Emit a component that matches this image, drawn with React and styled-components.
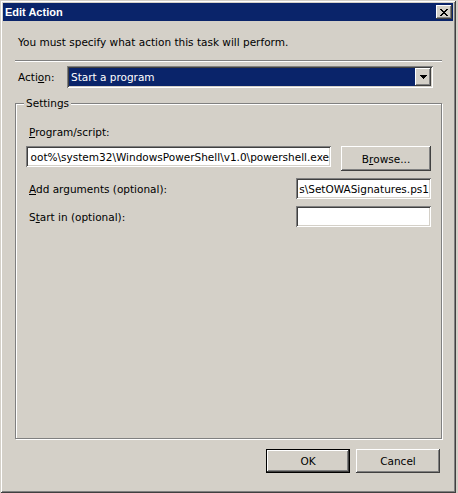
import React from 'react';
import styled, { createGlobalStyle, css } from 'styled-components';

const GlobalStyle = createGlobalStyle`
  html, body {
    margin: 0;
    padding: 0;
    background: #d4d0c8;
  }
  body {
    font-family: Tahoma, "DejaVu Sans", sans-serif;
    font-size: 10.5px;
    color: #000;
  }
`;

const raised = css`
  box-shadow: inset -1px -1px 0 #404040, inset 1px 1px 0 #fff,
    inset -2px -2px 0 #808080, inset 2px 2px 0 #d4d0c8;
`;

const sunken = css`
  box-shadow: inset 1px 1px 0 #808080, inset -1px -1px 0 #fff,
    inset 2px 2px 0 #404040, inset -2px -2px 0 #d4d0c8;
`;

const Window = styled.div`
  width: 456px;
  height: 493px;
  box-sizing: border-box;
  padding: 3px;
  background: #d4d0c8;
  box-shadow: inset 1px 1px 0 #d4d0c8, inset -1px -1px 0 #404040,
    inset 2px 2px 0 #fff, inset -2px -2px 0 #808080;
  display: flex;
  flex-direction: column;
`;

const TitleBar = styled.div`
  height: 18px;
  background: #0a246a;
  display: flex;
  align-items: center;
  justify-content: space-between;
  padding: 0 1px 0 2px;
`;

const Title = styled.span`
  font-family: "Liberation Sans", Arial, sans-serif;
  font-weight: bold;
  font-size: 11px;
  color: #fff;
`;

const CloseButton = styled.div`
  width: 16px;
  height: 14px;
  background: #d4d0c8;
  ${raised};
  display: flex;
  align-items: center;
  justify-content: center;
`;

const Body = styled.div`
  display: flex;
  flex-direction: column;
  padding: 14px 11px 0 12px;
`;

const Intro = styled.div`
  padding-left: 3px;
  line-height: 14px;
`;

const Separator = styled.div`
  margin-top: 11px;
  border-top: 1px solid #808080;
  border-bottom: 1px solid #fff;
`;

const ActionRow = styled.div`
  margin-top: 4px;
  height: 22px;
  display: flex;
  align-items: center;
`;

const Label = styled.span`
  padding-left: 3px;
  line-height: 14px;
  width: ${(p) => p.width || 'auto'};
  flex-shrink: 0;
  box-sizing: border-box;
`;

const Combo = styled.div`
  flex: 1;
  height: 22px;
  margin-right: 9px;
  box-sizing: border-box;
  padding: 2px;
  background: #fff;
  ${sunken};
  display: flex;
`;

const ComboValue = styled.div`
  flex: 1;
  background: #0a246a;
  color: #fff;
  padding-left: 2px;
  display: flex;
  align-items: center;
`;

const ComboArrow = styled.div`
  width: 16px;
  background: #d4d0c8;
  ${raised};
  display: flex;
  align-items: center;
  justify-content: center;
`;

const Group = styled.div`
  position: relative;
  margin-top: 15px;
  height: 336px;
  box-sizing: border-box;
  border: 1px solid #808080;
  box-shadow: inset 1px 1px 0 #fff, 1px 1px 0 #fff;
  padding: 21px 10px 0 10px;
  display: flex;
  flex-direction: column;
`;

const Legend = styled.span`
  position: absolute;
  top: -8px;
  left: 8px;
  padding: 0 2px;
  line-height: 14px;
  background: #d4d0c8;
`;

const FieldRow = styled.div`
  margin-top: 7px;
  display: flex;
  align-items: ${(p) => (p.top ? 'flex-start' : 'center')};
  justify-content: space-between;
  gap: 8px;
`;

const Field = styled.div`
  width: ${(p) => p.width}px;
  height: 21px;
  box-sizing: border-box;
  padding: 0 2px;
  background: #fff;
  ${sunken};
  display: flex;
  align-items: center;
  justify-content: flex-end;
  overflow: hidden;
  white-space: nowrap;
`;

const Button = styled.div`
  width: ${(p) => p.width || 84}px;
  height: ${(p) => p.height || 24}px;
  box-sizing: border-box;
  background: #d4d0c8;
  ${raised};
  border: ${(p) => (p.primary ? '1px solid #000' : 'none')};
  display: flex;
  align-items: center;
  justify-content: center;
  cursor: default;
`;

const Footer = styled.div`
  margin-top: 10px;
  padding-right: 2px;
  display: flex;
  justify-content: flex-end;
  gap: 6px;
`;

const CloseIcon = () => (
  <svg width="8" height="7" viewBox="0 0 8 7" shapeRendering="crispEdges">
    <path
      d="M0 0h2v1H0zM6 0h2v1H6zM1 1h2v1H1zM5 1h2v1H5zM2 2h4v1H2zM3 3h2v1H3zM2 4h4v1H2zM1 5h2v1H1zM5 5h2v1H5zM0 6h2v1H0zM6 6h2v1H6z"
      fill="#000"
    />
  </svg>
);

const DownArrow = () => (
  <svg width="7" height="4" viewBox="0 0 7 4" shapeRendering="crispEdges">
    <path d="M0 0h7v1H0zM1 1h5v1H1zM2 2h3v1H2zM3 3h1v1H3z" fill="#000" />
  </svg>
);

export default function App() {
  return (
    <>
      <GlobalStyle />
      <Window>
        <TitleBar>
          <Title>Edit Action</Title>
          <CloseButton>
            <CloseIcon />
          </CloseButton>
        </TitleBar>
        <Body>
          <Intro>You must specify what action this task will perform.</Intro>
          <Separator />
          <ActionRow>
            <Label width="52px">
              Acti<u>o</u>n:
            </Label>
            <Combo>
              <ComboValue>Start a program</ComboValue>
              <ComboArrow>
                <DownArrow />
              </ComboArrow>
            </Combo>
          </ActionRow>
          <Group>
            <Legend>Settings</Legend>
            <Label>
              <u>P</u>rogram/script:
            </Label>
            <FieldRow top>
              <Field width={305}>oot%\system32\WindowsPowerShell\v1.0\powershell.exe</Field>
              <Button width={90} height={25}>
                B<u>r</u>owse...
              </Button>
            </FieldRow>
            <FieldRow>
              <Label>
                <u>A</u>dd arguments (optional):
              </Label>
              <Field width={135}>s\SetOWASignatures.ps1</Field>
            </FieldRow>
            <FieldRow>
              <Label>
                S<u>t</u>art in (optional):
              </Label>
              <Field width={135} />
            </FieldRow>
          </Group>
          <Footer>
            <Button primary>OK</Button>
            <Button>Cancel</Button>
          </Footer>
        </Body>
      </Window>
    </>
  );
}
